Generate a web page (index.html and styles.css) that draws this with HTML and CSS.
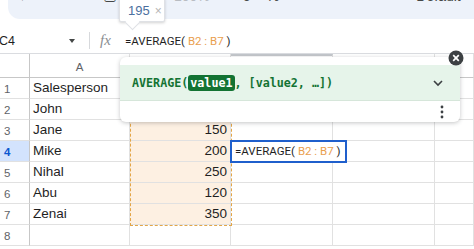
FILE: index.html
```html
<!DOCTYPE html>
<html>
<head>
    <title>Sheet - AVERAGE</title>
    <link rel="stylesheet" href="styles.css">
</head>
<body>
    <div class="toolbar">
        <div class="tools">
            <span class="tool">&#x2315;</span>
            <span class="tool">&#x21B6;</span>
            <span class="tool">&#x21B7;</span>
            <span class="tool">&#x2399;</span>
            <span class="tool zoom">100%</span>
            <span class="sep"></span>
            <span class="tool">&#x20AC;</span>
            <span class="tool">%</span>
            <span class="tool small">.0&#x2190;</span>
            <span class="tool small">.00&#x2192;</span>
            <span class="tool small">123</span>
            <span class="sep"></span>
            <span class="tool font">Default</span>
        </div>
    </div>

    <div class="formula-bar">
        <div class="name-box">
            <span>C4</span>
            <span class="caret"></span>
        </div>
        <span class="divider"></span>
        <span class="fx">fx</span>
        <span class="formula">=AVERAGE( <span class="ref">B2 : B7</span> )</span>
    </div>

    <div class="grid">
        <div class="hdr corner"></div>
        <div class="hdr col">A</div>
        <div class="hdr col">B</div>
        <div class="hdr col active-col">C</div>
        <div class="hdr col">D</div>
        <div class="hdr col">E</div>

        <div class="hdr row">1</div>
        <div class="cell">Salesperson</div>
        <div class="cell"></div>
        <div class="cell"></div>
        <div class="cell"></div>
        <div class="cell"></div>

        <div class="hdr row">2</div>
        <div class="cell">John</div>
        <div class="cell num range">195</div>
        <div class="cell"></div>
        <div class="cell"></div>
        <div class="cell"></div>

        <div class="hdr row">3</div>
        <div class="cell">Jane</div>
        <div class="cell num range">150</div>
        <div class="cell"></div>
        <div class="cell"></div>
        <div class="cell"></div>

        <div class="hdr row active-row">4</div>
        <div class="cell">Mike</div>
        <div class="cell num range">200</div>
        <div class="cell"></div>
        <div class="cell"></div>
        <div class="cell"></div>

        <div class="hdr row">5</div>
        <div class="cell">Nihal</div>
        <div class="cell num range">250</div>
        <div class="cell"></div>
        <div class="cell"></div>
        <div class="cell"></div>

        <div class="hdr row">6</div>
        <div class="cell">Abu</div>
        <div class="cell num range">120</div>
        <div class="cell"></div>
        <div class="cell"></div>
        <div class="cell"></div>

        <div class="hdr row">7</div>
        <div class="cell">Zenai</div>
        <div class="cell num range">350</div>
        <div class="cell"></div>
        <div class="cell"></div>
        <div class="cell"></div>

        <div class="hdr row">8</div>
        <div class="cell"></div>
        <div class="cell"></div>
        <div class="cell"></div>
        <div class="cell"></div>
        <div class="cell"></div>

        <div class="range-border"></div>
        <div class="editor">=AVERAGE( <span class="ref">B2 : B7</span> )</div>
    </div>

    <!-- result preview over the toolbar -->
    <div class="preview">
        <span class="preview-value">195</span>
        <span class="preview-close">&times;</span>
    </div>

    <!-- function help popup -->
    <div class="help">
        <div class="help-head">
            <span class="sig">AVERAGE(<span class="arg">value1</span>, [value2, &hellip;])</span>
            <svg class="chevron" width="12" height="8" viewBox="0 0 12 8">
                <path d="M2 2 L6 6 L10 2" fill="none" stroke="#3c4043" stroke-width="1.6"/>
            </svg>
        </div>
        <div class="help-foot">
            <svg width="4" height="14" viewBox="0 0 4 14">
                <circle cx="2" cy="2" r="1.4" fill="#3c4043"/>
                <circle cx="2" cy="7" r="1.4" fill="#3c4043"/>
                <circle cx="2" cy="12" r="1.4" fill="#3c4043"/>
            </svg>
        </div>
        <svg class="help-close" width="16" height="16" viewBox="0 0 16 16">
            <circle cx="8" cy="8" r="7.5" fill="#3c4043"/>
            <path d="M5.2 5.2 L10.8 10.8 M10.8 5.2 L5.2 10.8" stroke="#fff" stroke-width="1.7"/>
        </svg>
    </div>
</body>
</html>
```

FILE: styles.css
```css
body { margin: 0; width: 474px; height: 249px; overflow: hidden; position: relative; background: #fff; font-family: "Liberation Sans", Arial, sans-serif; color: #1f1f1f; }

.toolbar { height: 19px; margin-left: 8px; background: #edf2fa; border-bottom-left-radius: 12px; overflow: hidden; }
.tools { display: flex; align-items: center; height: 16px; margin-top: -12px; padding-left: 14px; color: #444746; font-size: 15px; }
.tool { margin-right: 16px; line-height: 16px; }
.tool.zoom { margin-left: 42px; margin-right: 18px; color: #b8bcc2; font-size: 14px; }
.tool.small { font-size: 11px; font-weight: bold; margin-right: 14px; }
.tool.font { font-size: 14px; }
.sep { width: 1px; height: 18px; background: #c7c7c7; margin-right: 14px; }

.formula-bar { display: flex; align-items: center; height: 25px; margin-top: 9px; border-bottom: 1px solid #dadce0; }
.name-box { display: flex; align-items: center; width: 90px; margin-left: -1px; font-size: 12.5px; }
.caret { margin-left: auto; margin-right: 14px; border-left: 3.5px solid transparent; border-right: 3.5px solid transparent; border-top: 4px solid #444746; }
.divider { width: 1px; height: 17px; background: #d7d9dc; }
.fx { margin-left: 10px; width: 25px; font-family: "Liberation Serif", serif; font-style: italic; font-size: 15px; color: #8a8d91; }
.formula { font-family: Roboto, sans-serif; font-size: 11.5px; color: #1f1f1f; white-space: pre; }
.ref { color: #e9a04f; }

.grid { position: relative; display: grid; grid-template-columns: 30px 100px 101px 102px 102px 1fr; grid-template-rows: 24px repeat(8, 21px); }
.hdr, .cell { box-sizing: border-box; border-right: 1px solid #e1e1e1; border-bottom: 1px solid #e1e1e1; }
.hdr { display: flex; align-items: center; justify-content: center; padding-top: 2px; font-size: 11.5px; color: #5f6368; }
.hdr.col { border-bottom-color: #c7c7c7; }
.hdr.row { justify-content: flex-start; padding-left: 4px; border-right-color: #c7c7c7; }
.hdr.corner { border-right-color: #c7c7c7; border-bottom-color: #c7c7c7; }
.hdr.active-col { border-top: 2px solid #c4c7cc; }
.hdr.active-row { background: #d3e3fd; color: #0b57d0; font-weight: bold; }
.cell { display: flex; align-items: flex-end; padding: 0 3px 3px; font-size: 13.5px; white-space: nowrap; }
.cell.num { justify-content: flex-end; }
.cell.range { background: #fdf0e2; }
.range-border { position: absolute; left: 130px; top: 45px; width: 102px; height: 127px; box-sizing: border-box; border: 1.5px dashed #e3a546; }

.editor { position: absolute; left: 230px; top: 86px; width: 117px; height: 23px; box-sizing: border-box; border: 2px solid #1f5fcc; background: #fff; padding-left: 3px; font-family: Roboto, sans-serif; font-size: 11.5px; line-height: 19px; white-space: pre; }

.preview { position: absolute; left: 119px; top: -3px; width: 46px; height: 25px; box-sizing: border-box; display: flex; align-items: center; padding: 2px 0 0 8px; background: #fff; border: 1px solid #dfe1e5; border-radius: 2px; box-shadow: 0 1px 3px rgba(0,0,0,0.18); font-size: 13px; }
.preview::after { content: ""; position: absolute; left: 7px; bottom: -7px; width: 10px; height: 10px; background: #fff; border-right: 1px solid #dfe1e5; border-bottom: 1px solid #dfe1e5; transform: rotate(45deg); }
.preview-value { color: #4b6f9e; }
.preview-close { margin-left: 5px; color: #b5b5b5; font-size: 12px; }

.help { position: absolute; left: 120px; top: 57px; width: 340px; height: 65px; background: #fff; border-radius: 6px; box-shadow: 0 1px 4px rgba(60,64,67,0.3); }
.help-head { display: flex; align-items: center; height: 36px; margin-top: 8px; padding: 0 12px; background: #e6f4ea; border-bottom: 1px solid #d6e6da; box-sizing: border-box; }
.sig { font-family: "DejaVu Sans Mono", monospace; font-weight: bold; font-size: 11.7px; color: #137333; white-space: pre; }
.arg { background: #137333; color: #fff; border-radius: 3px; padding: 1px 2px; }
.chevron { margin-left: auto; margin-right: 4px; }
.help-foot { display: flex; justify-content: flex-end; align-items: center; height: 21px; padding-right: 16px; }
.help-close { position: absolute; right: -4px; top: -7px; }
```
